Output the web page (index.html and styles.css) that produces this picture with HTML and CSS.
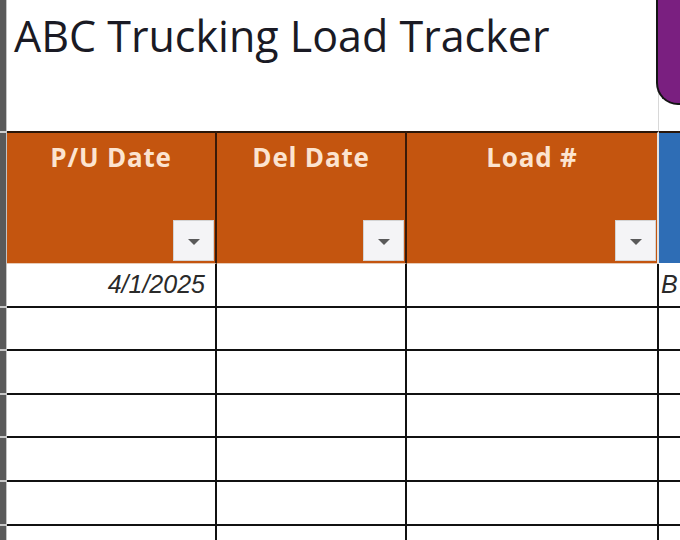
FILE: index.html
```html
<!DOCTYPE html>
<html lang="en">
<head>
<meta charset="utf-8">
<title>ABC Trucking Load Tracker</title>
<link rel="stylesheet" href="styles.css">
</head>
<body>
<div class="sheet">
  <div class="title-row">
    <div class="gutter"></div>
    <div class="title-cell"><h1 class="title">ABC Trucking Load Tracker</h1></div>
    <div class="shape-cell"></div>
  </div>
  <div class="row header-row">
    <div class="gutter"></div>
    <div class="hcell">
      <span class="hlabel">P/U Date</span>
      <span class="filter"><svg width="14" height="8" viewBox="0 0 14 8"><polygon points="1,1 13,1 7,7" fill="#5a5a5a"/></svg></span>
    </div>
    <div class="hcell">
      <span class="hlabel">Del Date</span>
      <span class="filter"><svg width="14" height="8" viewBox="0 0 14 8"><polygon points="1,1 13,1 7,7" fill="#5a5a5a"/></svg></span>
    </div>
    <div class="hcell hcell-last">
      <span class="hlabel">Load #</span>
      <span class="filter"><svg width="14" height="8" viewBox="0 0 14 8"><polygon points="1,1 13,1 7,7" fill="#5a5a5a"/></svg></span>
    </div>
    <div class="hcell hcell-blue"></div>
  </div>
  <div class="row data-row">
    <div class="gutter"></div>
    <div class="cell cell-date">4/1/2025</div>
    <div class="cell"></div>
    <div class="cell"></div>
    <div class="cell cell-text">B</div>
  </div>
  <div class="row data-row">
    <div class="gutter"></div>
    <div class="cell"></div><div class="cell"></div><div class="cell"></div><div class="cell"></div>
  </div>
  <div class="row data-row">
    <div class="gutter"></div>
    <div class="cell"></div><div class="cell"></div><div class="cell"></div><div class="cell"></div>
  </div>
  <div class="row data-row">
    <div class="gutter"></div>
    <div class="cell"></div><div class="cell"></div><div class="cell"></div><div class="cell"></div>
  </div>
  <div class="row data-row">
    <div class="gutter"></div>
    <div class="cell"></div><div class="cell"></div><div class="cell"></div><div class="cell"></div>
  </div>
  <div class="row data-row">
    <div class="gutter"></div>
    <div class="cell"></div><div class="cell"></div><div class="cell"></div><div class="cell"></div>
  </div>
  <div class="row data-row">
    <div class="gutter"></div>
    <div class="cell"></div><div class="cell"></div><div class="cell"></div><div class="cell"></div>
  </div>
  <div class="shape"></div>
</div>
</body>
</html>
```
FILE: styles.css
```css
* { box-sizing: border-box; }
html, body {
  margin: 0;
  padding: 0;
  background: #ffffff;
  overflow: hidden;
  width: 680px;
  height: 540px;
}
.sheet {
  position: relative;
  width: 680px;
  height: 540px;
  overflow: hidden;
  display: flex;
  flex-direction: column;
}
.gutter {
  background: #5a5a5a;
  border-right: 1px solid #c4c4c4;
}
.title-row {
  display: grid;
  grid-template-columns: 7px 652px 1fr;
  height: 131px;
  flex: none;
}
.title-cell {
  border-right: 1px solid #d8d8d8;
  padding: 10px 0 0 7px;
}
.title {
  margin: 0;
  font-family: "Open Sans", "Noto Sans", sans-serif;
  font-weight: 400;
  font-size: 43px;
  line-height: 52px;
  color: #1a1a24;
  white-space: nowrap;
}
.row {
  display: grid;
  grid-template-columns: 7px 210px 190px 252px 1fr;
  flex: none;
}
.header-row {
  height: 133px;
}
.header-row .gutter {
  border-top: 2px solid #cfcfcf;
}
.hcell {
  background: #c4550f;
  border-top: 2px solid #2a1608;
  border-right: 2px solid #3a1a08;
  border-bottom: 1px solid #e8cbb6;
  display: flex;
  flex-direction: column;
  align-items: center;
  padding-top: 9px;
}
.hcell-last {
  border-right-color: #e2e2e2;
}
.hcell-blue {
  background: #2e6db5;
  border-right: none;
  border-bottom-color: #ffffff;
}
.hlabel {
  font-family: "Open Sans", "Liberation Sans", sans-serif;
  font-weight: 700;
  font-size: 26px;
  line-height: 30px;
  letter-spacing: 0.8px;
  color: #fce4d0;
}
.filter {
  margin-top: auto;
  margin-bottom: 2px;
  margin-right: 1px;
  align-self: flex-end;
  width: 41px;
  height: 41px;
  background: #f4f4f6;
  border: 1px solid #d4d4d4;
  display: flex;
  align-items: center;
  justify-content: center;
  padding-top: 2px;
}
.filter svg { display: block; }
.data-row {
  height: 43.6px;
}
.data-row .gutter {
  border-bottom: 2px solid #c8c8c8;
}
.cell {
  border-right: 2px solid #111111;
  border-bottom: 2px solid #111111;
  display: flex;
  align-items: center;
  font-family: "Liberation Sans", Arial, sans-serif;
  font-style: italic;
  font-size: 25px;
  color: #2a2a2a;
  overflow: hidden;
  white-space: nowrap;
}
.cell:last-child {
  border-right: none;
}
.cell-date {
  justify-content: flex-end;
  padding-right: 10px;
}
.cell-text {
  padding-left: 2px;
}
.shape {
  position: absolute;
  left: 656px;
  top: 0;
  width: 24px;
  height: 105px;
  background: #7a1f80;
  border-left: 2px solid #141414;
  border-bottom: 2px solid #141414;
  border-radius: 0 0 0 22px;
}
```
